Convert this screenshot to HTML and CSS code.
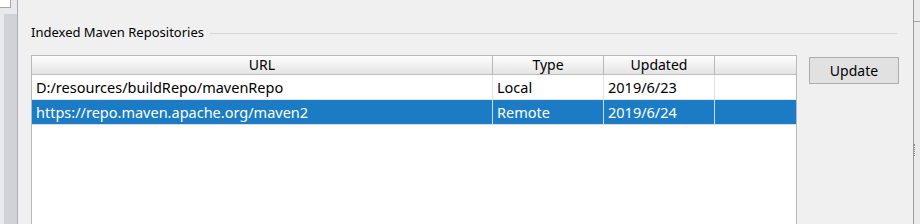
FILE: index.html
```html
<!DOCTYPE html>
<html lang="en">
<head>
    <meta charset="UTF-8">
    <title>Maven Repositories</title>
    <link rel="stylesheet" href="styles.css">
</head>
<body>

    <!-- strip of the tree view on the left -->
    <div class="side">
        <div class="side-box"></div>
        <div class="side-strip"></div>
    </div>

    <div class="page">
        <div class="group-title">
            <span>Indexed Maven Repositories</span>
            <div class="rule"></div>
        </div>

        <div class="group-body">
            <div class="grid">
                <table>
                    <thead>
                        <tr>
                            <th class="col-url">URL</th>
                            <th class="col-type">Type</th>
                            <th class="col-date">Updated</th>
                            <th class="col-rest"></th>
                        </tr>
                    </thead>
                    <tbody>
                        <tr>
                            <td>D:/resources/buildRepo/mavenRepo</td>
                            <td>Local</td>
                            <td>2019/6/23</td>
                            <td></td>
                        </tr>
                        <tr class="selected">
                            <td>https://repo.maven.apache.org/maven2</td>
                            <td>Remote</td>
                            <td>2019/6/24</td>
                            <td></td>
                        </tr>
                    </tbody>
                </table>
            </div>
            <button class="btn">Update</button>
        </div>
    </div>

    <!-- splitter edge on the right -->
    <div class="pane-edge">
        <div class="pane-top"></div>
        <div class="grip"></div>
    </div>

</body>
</html>
```

FILE: styles.css
```css
body {
    margin: 0;
    height: 224px;
    overflow: hidden;
    display: flex;
    background: #f0f0f0;
    font-family: "Noto Sans", "Open Sans", sans-serif;
    color: #000;
}
/* left tree strip */
.side {
    width: 17px;
    border-right: 1px solid #a9acb0;
    background: #e7e9ec;
    display: flex;
    flex-direction: column;
}
.side-box {
    width: 11px;
    height: 8px;
    box-sizing: border-box;
    background: #fff;
    border-right: 1px solid #a4a8ac;
    border-bottom: 1px solid #a4a8ac;
}
.side-strip {
    flex: 1;
    margin: 6px 0 0 4px;
    background: #cfd2d6;
}
/* main page */
.page {
    flex: 1;
    padding: 24px 14px 0 13px;
}
.group-title {
    display: flex;
    align-items: center;
    gap: 6px;
    font-size: 13px;
    line-height: 16px;
}
.rule {
    flex: 1;
    height: 1px;
    margin: 2px 2px 0 0;
    background: #d5d5d5;
}
.group-body {
    display: flex;
    align-items: flex-start;
    gap: 12px;
    margin-top: 15px;
}
/* repository table */
.grid {
    width: 766px;
    height: 169px;
    box-sizing: border-box;
    border: 1px solid #b9b9b9;
    border-bottom: none;
    background: #fff;
}
.grid table {
    width: 764px;
    table-layout: fixed;
    border-collapse: separate;
    border-spacing: 0;
}
.grid th {
    box-sizing: border-box;
    height: 19px;
    padding: 0;
    font-size: 14px;
    font-weight: normal;
    line-height: 18px;
    text-align: center;
    background: linear-gradient(#fdfdfd, #e4e4e4);
    border-right: 1px solid #b8b8b8;
    border-bottom: 1px solid #bdbdbd;
}
.col-url { width: 461px; }
.col-type { width: 111px; }
.col-date { width: 111px; }
.grid th.col-rest {
    border-right: none;
}
.grid td {
    height: 25px;
    box-sizing: border-box;
    padding: 0 4px;
    font-size: 14.5px;
    line-height: 24px;
    white-space: nowrap;
    overflow: hidden;
    border-right: 1px solid #e2e2e2;
    border-bottom: 1px solid #e6e6e6;
}
.grid td:last-child {
    border-right: none;
}
.grid tr.selected td {
    background: #1b7bc5;
    color: #fff;
    border-right-color: #c9deef;
    border-bottom-color: #dcdcdc;
}
.grid tr.selected td:last-child {
    border-right: none;
}
/* button */
.btn {
    width: 90px;
    height: 27px;
    margin-top: 2px;
    padding: 0;
    border: 1px solid #adadad;
    background: #e1e1e1;
    font-family: "Noto Sans", "Open Sans", sans-serif;
    font-size: 14px;
    color: #000;
}
/* right splitter */
.pane-edge {
    width: 6px;
    border-left: 1px solid #9c9c9c;
    background: #ebebeb;
}
.pane-top {
    height: 21px;
    border-bottom: 1px solid #a3a3a3;
}
.grip {
    width: 1px;
    height: 12px;
    margin-top: 122px;
    border-left: 1px dotted #8a8a8a;
}
```
